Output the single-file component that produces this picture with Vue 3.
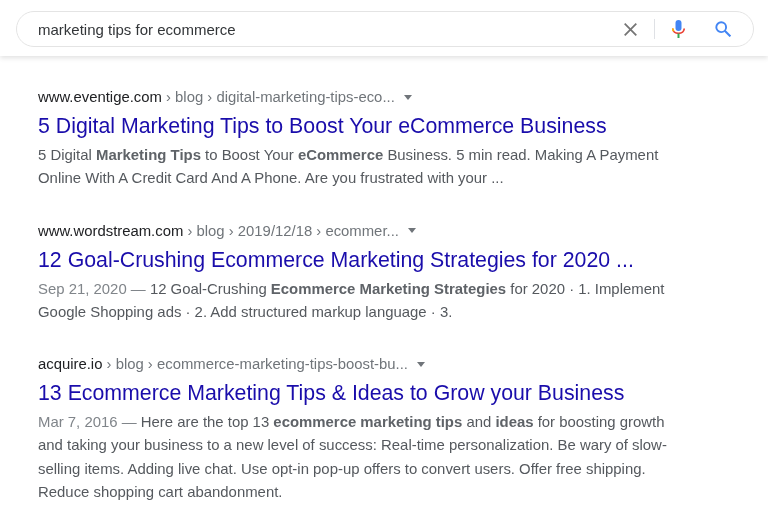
<script setup>
const results = [
  {
    site: 'www.eventige.com', path: ' › blog › digital-marketing-tips-eco...',
    title: '5 Digital Marketing Tips to Boost Your eCommerce Business',
    lines: [
      [['5 Digital ', 0], ['Marketing Tips', 1], [' to Boost Your ', 0], ['eCommerce', 1], [' Business. 5 min read. Making A Payment', 0]],
      [['Online With A Credit Card And A Phone. Are you frustrated with your ...', 0]],
    ],
  },
  {
    site: 'www.wordstream.com', path: ' › blog › 2019/12/18 › ecommer...',
    title: '12 Goal-Crushing Ecommerce Marketing Strategies for 2020 ...',
    lines: [
      [['Sep 21, 2020 — ', 2], ['12 Goal-Crushing ', 0], ['Ecommerce Marketing Strategies', 1], [' for 2020 · 1. Implement', 0]],
      [['Google Shopping ads · 2. Add structured markup language · 3.', 0]],
    ],
  },
  {
    site: 'acquire.io', path: ' › blog › ecommerce-marketing-tips-boost-bu...',
    title: '13 Ecommerce Marketing Tips & Ideas to Grow your Business',
    lines: [
      [['Mar 7, 2016 — ', 2], ['Here are the top 13 ', 0], ['ecommerce marketing tips', 1], [' and ', 0], ['ideas', 1], [' for boosting growth', 0]],
      [['and taking your business to a new level of success: Real-time personalization. Be wary of slow-', 0]],
      [['selling items. Adding live chat. Use opt-in pop-up offers to convert users. Offer free shipping.', 0]],
      [['Reduce shopping cart abandonment.', 0]],
    ],
  },
]
</script>

<template>
  <div class="page">
    <header class="head">
      <div class="search">
        <span class="query">marketing tips for ecommerce</span>
        <svg class="x" width="13" height="13" viewBox="0 0 13 13"><path d="M.7.7l11.6 11.6M12.3.7L.7 12.3" stroke="#757575" stroke-width="1.8" fill="none"/></svg>
        <span class="divider"></span>
        <svg class="mic" width="13" height="18" viewBox="0 0 13 18">
          <rect x="3.5" y="0" width="6" height="11" rx="3" fill="#4285f4"/>
          <path d="M.8 8.5c0 3 2.5 4.8 5.7 4.8s5.7-1.8 5.7-4.8" stroke="#ea4335" stroke-width="1.7" fill="none"/>
          <path d="M.8 8.5c0 1 .3 1.8.8 2.5" stroke="#fbbc05" stroke-width="1.7" fill="none"/>
          <rect x="5.5" y="13.5" width="2" height="4.5" fill="#34a853"/>
        </svg>
        <svg class="glass" width="16" height="16" viewBox="0 0 16 16"><circle cx="6.2" cy="6.2" r="4.9" stroke="#4285f4" stroke-width="1.9" fill="none"/><path d="M9.8 9.8l5.6 5.6" stroke="#4285f4" stroke-width="2" fill="none"/></svg>
      </div>
    </header>
    <main class="results">
      <article v-for="r in results" :key="r.site" class="result">
        <div class="cite"><span class="site">{{ r.site }}</span><span class="path">{{ r.path }}</span><i class="caret"></i></div>
        <h3 class="title">{{ r.title }}</h3>
        <div class="snippet">
          <div v-for="(l, i) in r.lines" :key="i"><template v-for="(p, j) in l" :key="j"><b v-if="p[1] === 1">{{ p[0] }}</b><span v-else-if="p[1] === 2" class="date">{{ p[0] }}</span><template v-else>{{ p[0] }}</template></template></div>
        </div>
      </article>
    </main>
  </div>
</template>

<style>
html, body { margin: 0; background: #fff; overflow: hidden; }
</style>
<style scoped>
.page { width: 768px; height: 516px; overflow: hidden; font-family: "Liberation Sans", Arial, sans-serif; filter: blur(.3px); }
.head { height: 56px; box-sizing: border-box; padding: 11px 14px 0 16px; box-shadow: 0 2px 5px rgba(0,0,0,.12); }
.search { height: 36px; box-sizing: border-box; border: 1px solid #e4e4e4; border-radius: 18px; display: flex; align-items: center; padding: 0 22px 0 21px; }
.query { flex: 1; font-size: 15px; color: #333639; }
.x { margin-right: 17px; }
.divider { width: 1px; height: 20px; background: #dfe1e5; margin-right: 17px; }
.mic { margin-right: 30px; }
.results { padding: 31px 0 0 38px; }
.result { margin-bottom: 31px; }
.cite { font-size: 14.87px; line-height: 20px; display: flex; align-items: center; white-space: pre; }
.site { color: #202124; }
.path { color: #70757a; }
.caret { width: 0; height: 0; border: 4.5px solid transparent; border-top: 5px solid #70757a; border-bottom: 0; margin-left: 9px; }
.title { margin: 4px 0 0; font-size: 21.32px; line-height: 30px; font-weight: 400; color: #1a0dab; white-space: nowrap; }
.snippet { margin-top: 2px; font-size: 14.92px; line-height: 23.3px; color: #55595e; white-space: pre; }
.snippet b { color: #5f6368; }
.date { color: #80858a; }
</style>
